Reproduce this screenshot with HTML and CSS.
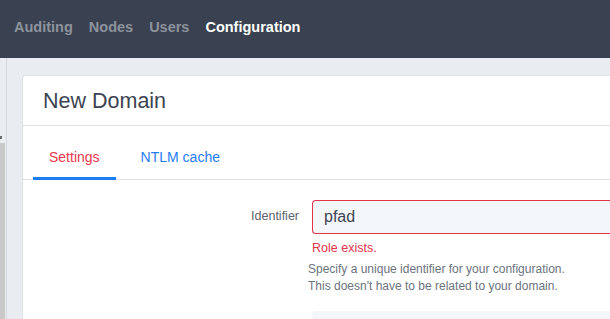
FILE: index.html
```html
<!DOCTYPE html>
<html>
<head>
<meta charset="utf-8">
<link rel="stylesheet" href="styles.css">
</head>
<body>
<nav class="topbar">
  <a class="nav-link">Auditing</a>
  <a class="nav-link">Nodes</a>
  <a class="nav-link">Users</a>
  <a class="nav-link active">Configuration</a>
</nav>
<div class="main">
  <aside class="side">
    <div class="side-scroll">
      <div class="scroll-arrow"></div>
      <div class="scroll-track"></div>
    </div>
  </aside>
  <div class="content">
    <section class="card">
      <header class="card-header">New Domain</header>
      <div class="tabs">
        <a class="tab active">Settings</a>
        <a class="tab">NTLM cache</a>
      </div>
      <div class="form">
        <div class="row">
          <label class="label">Identifier</label>
          <div class="field">
            <div class="input invalid">pfad</div>
            <div class="error">Role exists.</div>
            <div class="help">Specify a unique identifier for your configuration.<br>This doesn't have to be related to your domain.</div>
          </div>
        </div>
        <div class="row">
          <div class="label"></div>
          <div class="field"><div class="input plain"></div></div>
        </div>
      </div>
    </section>
  </div>
</div>
</body>
</html>
```
FILE: styles.css
```css
html, body {
  margin: 0;
  padding: 0;
}
body {
  width: 610px;
  height: 319px;
  overflow: hidden;
  font-family: "Liberation Sans", Arial, sans-serif;
  background: #e9edf2;
  color: #495057;
}
.topbar {
  height: 58px;
  background: #3a4150;
  display: flex;
  align-items: center;
  gap: 16px;
  padding: 0 14px;
  box-sizing: border-box;
  padding-bottom: 4px;
}
.nav-link {
  font-weight: bold;
  font-size: 14.5px;
  color: #8d939d;
}
.nav-link.active {
  color: #ffffff;
}
.main {
  display: flex;
  height: 261px;
  overflow: hidden;
}
.side {
  width: 7px;
  display: flex;
}
.side-scroll {
  width: 5px;
  border-right: 1px solid #e9edf2;
  display: flex;
  flex-direction: column;
  padding-top: 78px;
}
.scroll-arrow {
  width: 2px;
  height: 3px;
  background: #6a6a6a;
  margin-bottom: 4px;
}
.scroll-track {
  flex: 1;
  background: #c9c9c9;
}
.side::after {
  content: "";
  width: 1px;
  background: #d4d8dd;
}
.content {
  flex: 1;
  padding: 17px 0 0 15px;
  min-width: 0;
  box-sizing: border-box;
  overflow: hidden;
}
.card {
  background: #fff;
  border: 1px solid #dde1e6;
  border-right: none;
  border-bottom: none;
  border-radius: 4px 0 0 0;
  height: 100%;
  box-sizing: border-box;
  overflow: hidden;
}
.card-header {
  height: 50px;
  box-sizing: border-box;
  padding: 13px 20px 0;
  font-size: 21.5px;
  color: #3d4451;
  border-bottom: 1px solid #dee2e6;
}
.tabs {
  display: flex;
  gap: 9px;
  padding-left: 10px;
  border-bottom: 1px solid #dee2e6;
}
.tab {
  font-size: 14px;
  padding: 23px 16px 12px;
  border-bottom: 3px solid transparent;
  margin-bottom: -1px;
  color: #1f7cf2;
}
.tab.active {
  color: #e6374b;
  border-bottom-color: #1b7cf3;
}
.form {
  padding-top: 20px;
}
.row {
  display: flex;
  gap: 13px;
}
.label {
  width: 276px;
  text-align: right;
  font-size: 12.5px;
  color: #5d6470;
  padding-top: 9px;
  flex: none;
}
.field {
  flex: 1;
}
.input {
  height: 34px;
  box-sizing: border-box;
  background: #f4f7fa;
  border-radius: 4px 0 0 4px;
  font-size: 16px;
  color: #3d4451;
  padding: 7px 11px;
}
.input.invalid {
  border: 1px solid #e3344a;
  border-right: none;
}
.error {
  color: #e3344a;
  font-size: 12.5px;
  margin-top: 7px;
}
.help {
  font-size: 12px;
  color: #6c737d;
  line-height: 17px;
  margin-left: -4px;
  margin-top: 6px;
}
.row + .row {
  margin-top: 16px;
}
```
